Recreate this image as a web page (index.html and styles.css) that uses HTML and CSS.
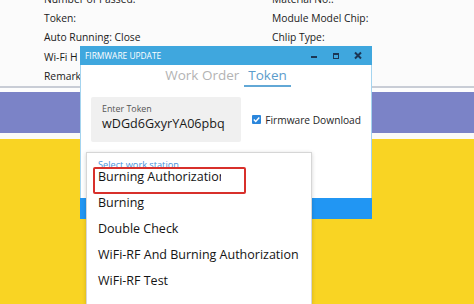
FILE: index.html
```html
<!DOCTYPE html>
<html>
<head>
<meta charset="utf-8">
<link rel="stylesheet" href="styles.css">
</head>
<body>
<div class="screen">
  <div class="info">
    <div class="info-col left">
      <div>Number of Passed:</div>
      <div>Token:</div>
      <div>Auto Running: Close</div>
      <div>Wi-Fi H</div>
      <div>Remark</div>
    </div>
    <div class="info-col right">
      <div>Material No.:</div>
      <div>Module Model Chip:</div>
      <div>Chlip Type:</div>
    </div>
  </div>
  <div class="sep"></div>
  <div class="band-purple"></div>
  <div class="gap"></div>
  <div class="band-yellow"></div>

  <div class="dialog">
    <div class="titlebar">
      <span class="title">FIRMWARE UPDATE</span>
      <div class="controls">
        <svg width="22" height="19" viewBox="0 0 22 19"><rect x="7" y="10" width="6" height="2" fill="#1b3654"/></svg>
        <svg width="22" height="19" viewBox="0 0 22 19"><rect x="7.5" y="7.5" width="5" height="5" fill="none" stroke="#1b3654" stroke-width="1"/><rect x="7" y="7" width="6" height="2" fill="#1b3654"/></svg>
        <svg width="22" height="19" viewBox="0 0 22 19"><path d="M7 6.5 L13 12.5 M13 6.5 L7 12.5" stroke="#1b3654" stroke-width="2"/></svg>
      </div>
    </div>
    <div class="body">
      <div class="tabs">
        <span class="tab">Work Order</span>
        <span class="tab active">Token</span>
      </div>
      <div class="row">
        <div class="field">
          <div class="field-label">Enter Token</div>
          <div class="field-value">wDGd6GxyrYA06pbq</div>
        </div>
        <label class="check">
          <span class="box"><svg width="9" height="9" viewBox="0 0 9 9"><path d="M1.8 4.6 L3.7 6.5 L7.3 2.5" fill="none" stroke="#fff" stroke-width="1.4"/></svg></span>
          <span class="check-text">Firmware Download</span>
        </label>
      </div>
    </div>
    <div class="footer"></div>

    <div class="dropdown">
      <div class="dd-label">Select work station</div>
      <div class="dd-item first"><span class="clip">Burning Authorization</span><span class="mark"></span></div>
      <div class="dd-item">Burning</div>
      <div class="dd-item">Double Check</div>
      <div class="dd-item">WiFi-RF And Burning Authorization</div>
      <div class="dd-item">WiFi-RF Test</div>
    </div>
  </div>
</div>
</body>
</html>
```

FILE: styles.css
```css
* { box-sizing: border-box; }
html, body { margin: 0; padding: 0; }
body {
  width: 474px;
  height: 304px;
  overflow: hidden;
  font-family: "Open Sans", "Noto Sans", sans-serif;
  background: #f9d423;
}
.screen {
  position: relative;
  width: 474px;
  height: 304px;
  display: flex;
  flex-direction: column;
  overflow: hidden;
}
.info {
  height: 86px;
  background: #fbfbfb;
  overflow: hidden;
  display: grid;
  grid-template-columns: 228px 1fr;
  padding-left: 44px;
  font-size: 10.3px;
  color: #1a1a1a;
}
.info-col {
  margin-top: -10px;
  line-height: 19.2px;
  white-space: nowrap;
}
.sep { height: 2px; background: #c9cdd6; }
.band-purple { height: 45px; border-top: 4px solid #fdfdfd; background: #7b83c7; }
.gap { height: 6px; background: #fbfbf8; }
.band-yellow { flex: 1; background: #f9d423; }

.dialog {
  position: absolute;
  left: 80px;
  top: 46px;
  width: 292px;
}
.titlebar {
  height: 19px;
  background: #3fa7de;
  display: flex;
  align-items: center;
  justify-content: space-between;
  padding-left: 5px;
}
.title {
  color: #fff;
  font-size: 8.4px;
  line-height: 19px;
}
.controls { display: flex; padding-right: 2px; }
.controls svg { display: block; }

.body {
  height: 133px;
  background: #fff;
  border-left: 1px solid #a4d4ef;
  border-right: 1px solid #a4d4ef;
  padding: 2px 10px 0;
}
.tabs {
  display: flex;
  justify-content: center;
  gap: 1px;
}
.tab {
  font-size: 13.5px;
  line-height: 17px;
  padding: 0 4px 1px;
  color: #b3b3b3;
  border-bottom: 2px solid transparent;
}
.tab.active {
  color: #5b9ccb;
  border-bottom-color: #62a8d6;
}
.row {
  margin-top: 10px;
  display: flex;
  align-items: center;
}
.field {
  width: 154px;
  height: 45px;
  background: #f0f0f0;
  border-radius: 2px;
  padding: 6px 11px 0;
}
.field-label {
  font-size: 8.9px;
  line-height: 11px;
  color: #555;
}
.field-value {
  margin-top: 2px;
  font-size: 12.6px;
  line-height: 16px;
  color: #1a1a1a;
}
.check {
  margin-left: 11px;
  display: flex;
  align-items: center;
  gap: 4px;
}
.box {
  width: 9px;
  height: 9px;
  background: #2a86dc;
  border-radius: 1px;
  display: block;
}
.box svg { display: block; }
.check-text {
  font-size: 10.2px;
  color: #262626;
  white-space: nowrap;
}
.footer {
  height: 21px;
  background: #2196f3;
}

.dropdown {
  position: absolute;
  left: 6px;
  top: 106px;
  width: 226px;
  height: 152px;
  overflow: hidden;
  background: #fff;
  border: 1px solid #d6d6d6;
  border-bottom: none;
  box-shadow: 0 1px 4px rgba(0,0,0,0.18);
  padding-left: 11px;
}
.dd-label {
  height: 14px;
  overflow: hidden;
  padding-top: 5.5px;
  font-size: 9.2px;
  line-height: 12px;
  color: #4a93da;
}
.dd-item {
  position: relative;
  font-size: 12.5px;
  line-height: 20px;
  height: 26px;
  color: #141414;
  white-space: nowrap;
}
.dd-item.first .clip {
  display: inline-block;
  width: 123px;
  overflow: hidden;
  vertical-align: top;
}
.mark {
  position: absolute;
  left: -5px;
  top: 0;
  width: 153px;
  height: 27px;
  border: 2px solid #d8302b;
  border-radius: 2px;
}
```
